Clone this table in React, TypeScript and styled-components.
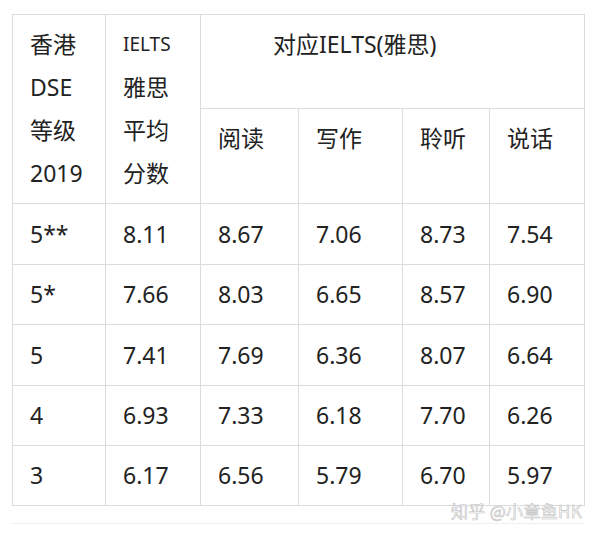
import React from "react";
import styled, { createGlobalStyle } from "styled-components";

const GlobalStyle = createGlobalStyle`
  html, body {
    margin: 0;
    padding: 0;
    background: #ffffff;
  }
  body {
    font-family: "Noto Sans", "Noto Sans CJK SC", sans-serif;
    color: #222222;
  }
`;

const Page = styled.div`
  position: relative;
  width: 600px;
  height: 535px;
  padding: 14px 0 0 12px;
  box-sizing: border-box;
`;

const Table = styled.table`
  border-collapse: collapse;
  table-layout: fixed;
  width: 572px;
  font-size: 23px;
  line-height: 43px;
`;

const HeadRow = styled.tr<{ $h: number }>`
  height: ${(p) => p.$h}px;
`;

const Row = styled.tr<{ $h: number }>`
  height: ${(p) => p.$h}px;
`;

const HeadCell = styled.th<{ $small?: boolean; $indent?: number }>`
  border: 1px solid #dcdcdc;
  padding: 8px 0 8px ${(p) => p.$indent ?? 17}px;
  vertical-align: top;
  text-align: left;
  font-weight: 400;
  font-size: ${(p) => (p.$small ? "19px" : "23px")};
`;

const Sub = styled.span`
  display: block;
  font-size: 23px;
`;

const Cell = styled.td`
  border: 1px solid #dcdcdc;
  padding: 8px 0 8px 17px;
  vertical-align: middle;
  text-align: left;
`;

const FootLine = styled.div`
  width: 572px;
  height: 1px;
  margin-top: 17px;
  background: #efefef;
`;

const Watermark = styled.div`
  position: absolute;
  left: 451px;
  top: 500px;
  font-family: "Noto Sans CJK SC", sans-serif;
  font-size: 17px;
  line-height: 22px;
  color: rgba(255, 255, 255, 0.85);
  -webkit-text-stroke: 0.6px #bdbdbd;
  letter-spacing: 0.3px;
`;

const cols = [93, 95, 98, 104, 87, 95];

const rows = [
  { h: 61, v: ["5**", "8.11", "8.67", "7.06", "8.73", "7.54"] },
  { h: 60, v: ["5*", "7.66", "8.03", "6.65", "8.57", "6.90"] },
  { h: 61, v: ["5", "7.41", "7.69", "6.36", "8.07", "6.64"] },
  { h: 60, v: ["4", "6.93", "7.33", "6.18", "7.70", "6.26"] },
  { h: 60, v: ["3", "6.17", "6.56", "5.79", "6.70", "5.97"] },
];

export default function App() {
  return (
    <Page>
      <GlobalStyle />
      <Table>
        <colgroup>
          {cols.map((w, i) => (
            <col key={i} style={{ width: w }} />
          ))}
        </colgroup>
        <thead>
          <HeadRow $h={94}>
            <HeadCell rowSpan={2}>
              香港
              <br />
              DSE
              <br />
              等级
              <br />
              2019
            </HeadCell>
            <HeadCell rowSpan={2} $small>
              IELTS
              <Sub>雅思</Sub>
              <Sub>平均</Sub>
              <Sub>分数</Sub>
            </HeadCell>
            <HeadCell colSpan={4} $indent={72}>
              对应IELTS(雅思)
            </HeadCell>
          </HeadRow>
          <HeadRow $h={95}>
            <HeadCell>阅读</HeadCell>
            <HeadCell>写作</HeadCell>
            <HeadCell>聆听</HeadCell>
            <HeadCell>说话</HeadCell>
          </HeadRow>
        </thead>
        <tbody>
          {rows.map((r) => (
            <Row key={r.v[0]} $h={r.h}>
              {r.v.map((v, i) => (
                <Cell key={i}>{v}</Cell>
              ))}
            </Row>
          ))}
        </tbody>
      </Table>
      <FootLine />
      <Watermark>知乎 @小章鱼HK</Watermark>
    </Page>
  );
}
